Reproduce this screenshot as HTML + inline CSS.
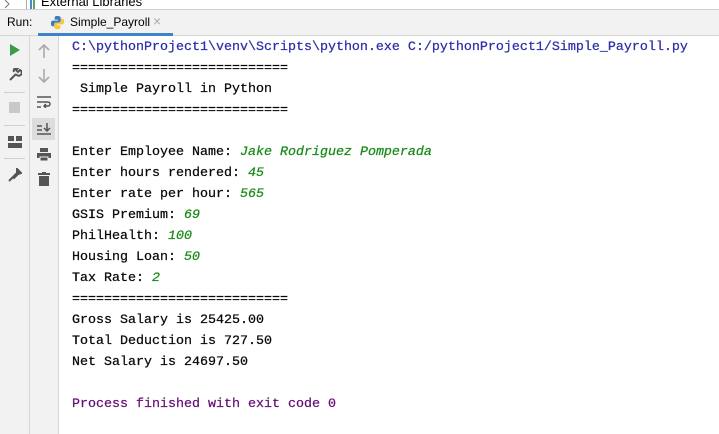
<!DOCTYPE html>
<html><head><style>
body{margin:0;width:719px;height:434px;overflow:hidden;background:#fff;font-family:"Liberation Sans",sans-serif;position:relative}
.top{position:absolute;left:0;top:0;width:719px;height:9px;background:#fff;border-bottom:1px solid #d0d0d0;overflow:hidden}
.top span{position:absolute;left:41px;top:-6px;font-size:13px;color:#000}
.tabs{position:absolute;left:0;top:10px;width:719px;height:25px;background:#f2f2f2;border-bottom:1px solid #d6d6d6}
.run{position:absolute;left:7px;top:5px;font-size:12px;color:#000}
.tab{position:absolute;left:55px;top:5px;font-size:12px;color:#000}
.x{position:absolute;left:153px;top:3px;font-size:14px;color:#aaa}
.ul{position:absolute;left:38px;top:23px;width:135px;height:3px;background:#4083c9}
.col1{position:absolute;left:0;top:36px;width:29px;height:398px;background:#f2f2f2;border-right:1px solid #d6d6d6}
.col2{position:absolute;left:30px;top:36px;width:28px;height:398px;background:#f2f2f2;border-right:1px solid #d6d6d6}
.sep{position:absolute;left:4px;width:21px;height:1px;background:#d0d0d0}
pre{position:absolute;left:72px;top:37px;margin:0;font-family:"Liberation Mono",monospace;font-size:13.33px;line-height:21px;color:#080808;-webkit-text-stroke:0.25px #080808}
.c{color:#2c2eab;-webkit-text-stroke-color:#2c2eab}.g{color:#188a18;font-style:italic;-webkit-text-stroke-color:#188a18}.p{color:#660e7a;-webkit-text-stroke-color:#660e7a}
</style></head><body>
<div class="top">
<svg style="position:absolute;left:3px;top:0" width="8" height="9"><path d="M2 0l4 4-4 4" stroke="#777" fill="none"/></svg>
<div style="position:absolute;left:26px;top:0;width:1px;height:9px;background:#aaa"></div>
<div style="position:absolute;left:30px;top:0;width:2px;height:9px;background:#4a8bd0"></div>
<div style="position:absolute;left:33px;top:0;width:2px;height:9px;background:#59a869"></div>
<span>External Libraries</span></div>
<div class="tabs"><span class="run">Run:</span>
<svg style="position:absolute;left:50px;top:5px" width="15" height="15" viewBox="0 0 16 16"><path d="M8 1C5 1 5 2 5 3v2h3.5v1H3c-1.5 0-2 1.5-2 3s.5 3 2 3h1.5v-2c0-1 1-2 2-2h3c1 0 2-1 2-2V3c0-1-1-2-3.5-2z" fill="#3f7cbf"/><path d="M8 15c3 0 3-1 3-2v-2H7.5v-1H13c1.5 0 2-1.5 2-3s-.5-3-2-3h-1.5v2c0 1-1 2-2 2h-3c-1 0-2 1-2 2v3c0 1 1 2 3.5 2z" fill="#f5c93a"/></svg>
<span class="tab" style="left:70px">Simple_Payroll</span><span class="x">×</span><div class="ul"></div></div>
<div class="col1">
<svg style="position:absolute;left:9px;top:8px" width="12" height="12"><path d="M1 0L11 6L1 12Z" fill="#3c9b48"/></svg>
<svg style="position:absolute;left:8px;top:32px" width="14" height="14" viewBox="0 0 14 14"><path d="M2 12L8 6M8 6a3 3 0 1 0 4-4l-2 2-2-2 2-2a3 3 0 0 0-4 4" stroke="#555" stroke-width="2" fill="none"/></svg>
<div class="sep" style="top:56px"></div>
<div style="position:absolute;left:9px;top:66px;width:11px;height:11px;background:#c8c8c8"></div>
<div class="sep" style="top:89px"></div>
<svg style="position:absolute;left:8px;top:100px" width="14" height="12"><rect x="0" y="0" width="6" height="5" fill="#555"/><rect x="8" y="0" width="6" height="5" fill="#555"/><rect x="0" y="7" width="14" height="5" fill="#555"/></svg>
<div class="sep" style="top:122px"></div>
<svg style="position:absolute;left:8px;top:132px" width="14" height="14"><path d="M9 1l4 4-3 1-4 4-1 -1 4-4zM6 8l-5 5" stroke="#555" stroke-width="2" fill="#555"/></svg>
</div>
<div class="col2">
<svg style="position:absolute;left:8px;top:8px" width="12" height="14"><path d="M6 1v13M1 6l5-5 5 5" stroke="#aaa" stroke-width="1.6" fill="none"/></svg>
<svg style="position:absolute;left:8px;top:33px" width="12" height="14"><path d="M6 0v13M1 8l5 5 5-5" stroke="#aaa" stroke-width="1.6" fill="none"/></svg>
<svg style="position:absolute;left:7px;top:60px" width="14" height="12"><path d="M0 1h14M0 6h11a2 2 0 0 1 0 4H7M9 8l-2 2 2 2M0 11h4" stroke="#555" stroke-width="1.5" fill="none"/></svg>
<div style="position:absolute;left:2px;top:82px;width:23px;height:22px;background:#dcdcdc"></div>
<svg style="position:absolute;left:7px;top:87px" width="14" height="12"><path d="M0 3h5M0 7h5M0 11h14M10 0v8M7 5l3 3 3-3" stroke="#555" stroke-width="1.5" fill="none"/></svg>
<svg style="position:absolute;left:7px;top:112px" width="14" height="13"><rect x="3" y="0" width="8" height="4" fill="#555"/><rect x="0" y="5" width="14" height="5" fill="#555"/><rect x="3" y="9" width="8" height="4" fill="#555" stroke="#f2f2f2"/></svg>
<svg style="position:absolute;left:8px;top:136px" width="12" height="14"><rect x="0" y="1" width="12" height="2" fill="#555"/><rect x="4" y="0" width="4" height="2" fill="#555"/><rect x="1" y="4" width="10" height="10" fill="#555"/></svg>
</div>
<pre><span class="c">C:\pythonProject1\venv\Scripts\python.exe C:/pythonProject1/Simple_Payroll.py</span>
===========================
 Simple Payroll in Python
===========================

Enter Employee Name: <span class="g">Jake Rodriguez Pomperada</span>
Enter hours rendered: <span class="g">45</span>
Enter rate per hour: <span class="g">565</span>
GSIS Premium: <span class="g">69</span>
PhilHealth: <span class="g">100</span>
Housing Loan: <span class="g">50</span>
Tax Rate: <span class="g">2</span>
===========================
Gross Salary is 25425.00
Total Deduction is 727.50
Net Salary is 24697.50

<span class="p">Process finished with exit code 0</span></pre>
</body></html>
